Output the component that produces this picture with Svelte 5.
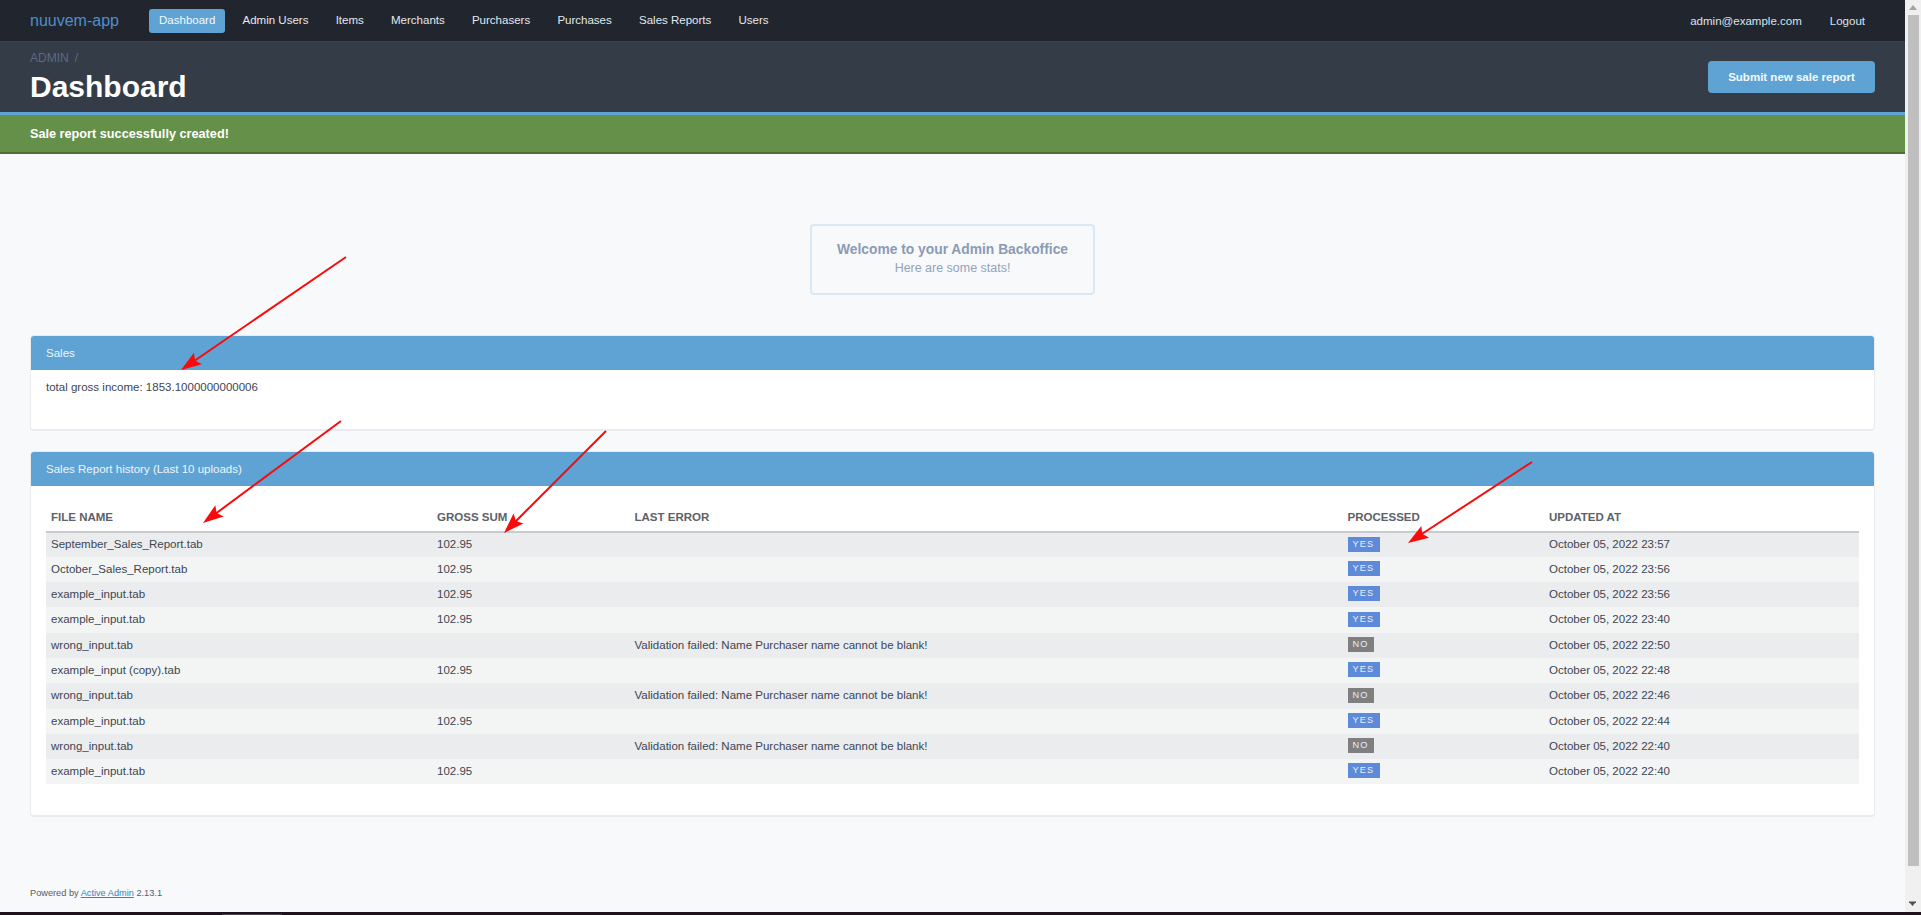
<script>
  const nav = ['Admin Users', 'Items', 'Merchants', 'Purchasers', 'Purchases', 'Sales Reports', 'Users'];
  const blank = 'Validation failed: Name Purchaser name cannot be blank!';
  const rows = [
    ['September_Sales_Report.tab', '102.95', '', 'YES', 'October 05, 2022 23:57'],
    ['October_Sales_Report.tab', '102.95', '', 'YES', 'October 05, 2022 23:56'],
    ['example_input.tab', '102.95', '', 'YES', 'October 05, 2022 23:56'],
    ['example_input.tab', '102.95', '', 'YES', 'October 05, 2022 23:40'],
    ['wrong_input.tab', '', blank, 'NO', 'October 05, 2022 22:50'],
    ['example_input (copy).tab', '102.95', '', 'YES', 'October 05, 2022 22:48'],
    ['wrong_input.tab', '', blank, 'NO', 'October 05, 2022 22:46'],
    ['example_input.tab', '102.95', '', 'YES', 'October 05, 2022 22:44'],
    ['wrong_input.tab', '', blank, 'NO', 'October 05, 2022 22:40'],
    ['example_input.tab', '102.95', '', 'YES', 'October 05, 2022 22:40']
  ];
  const arrows = [
    [346, 257, 181, 370],
    [341, 421, 203, 523],
    [606, 431, 504, 533],
    [1532, 462, 1408, 543]
  ].map(([x1, y1, x2, y2]) => {
    const len = Math.hypot(x2 - x1, y2 - y1);
    const ux = (x1 - x2) / len, uy = (y1 - y2) / len;
    const px = -uy, py = ux;
    const at = (a, b) => `${x2 + ux * a + px * b},${y2 + uy * a + py * b}`;
    return {
      x1, y1,
      nx: x2 + ux * 16, ny: y2 + uy * 16,
      head: [at(0, 0), at(20.5, 7), at(17, 0), at(20.5, -7)].join(' ')
    };
  });
</script>

<div class="screen">
  <div class="window">
    <div class="page">
      <header class="nav">
        <span class="brand">nuuvem-app</span>
        <ul class="tabs">
          <li class="tab current">Dashboard</li>
          {#each nav as item}
            <li class="tab">{item}</li>
          {/each}
        </ul>
        <div class="account">
          <span>admin@example.com</span>
          <span>Logout</span>
        </div>
      </header>

      <section class="titlebar">
        <div>
          <div class="crumbs"><span>ADMIN</span><span class="slash">/</span></div>
          <h2>Dashboard</h2>
        </div>
        <button class="action">Submit new sale report</button>
      </section>

      <div class="flash">Sale report successfully created!</div>

      <main class="content">
        <div class="welcome">
          <strong>Welcome to your Admin Backoffice</strong>
          <small>Here are some stats!</small>
        </div>

        <section class="panel">
          <h3>Sales</h3>
          <div class="panel-body sales">total gross income: 1853.1000000000006</div>
        </section>

        <section class="panel second">
          <h3>Sales Report history (Last 10 uploads)</h3>
          <div class="panel-body history">
            <table>
              <colgroup>
                <col class="c1" /><col class="c2" /><col class="c3" /><col class="c4" /><col class="c5" />
              </colgroup>
              <thead>
                <tr>
                  <th>FILE NAME</th><th>GROSS SUM</th><th>LAST ERROR</th><th>PROCESSED</th><th>UPDATED AT</th>
                </tr>
              </thead>
              <tbody>
                {#each rows as r}
                  <tr>
                    <td>{r[0]}</td>
                    <td>{r[1]}</td>
                    <td>{r[2]}</td>
                    <td><span class="tag" class:no={r[3] === 'NO'}>{r[3]}</span></td>
                    <td>{r[4]}</td>
                  </tr>
                {/each}
              </tbody>
            </table>
          </div>
        </section>
      </main>

      <footer class="foot">Powered by <a href="#top">Active Admin</a> 2.13.1</footer>
    </div>

    <div class="scrollbar">
      <svg class="sb-arrow" width="16" height="15" viewBox="0 0 16 15"><path d="M8 5 L12 10 H4 Z" fill="#a3a3a3" /></svg>
      <div class="thumb"></div>
      <svg class="sb-arrow down" width="16" height="15" viewBox="0 0 16 15"><path d="M4 4.500 H11 V6 H10 L7.500 9 L5 6 H4 Z" fill="#505050" /></svg>
    </div>
  </div>
  <div class="dock"><span></span></div>

  <svg class="marks" width="1921" height="915" viewBox="0 0 1921 915">
    {#each arrows as a}
      <line x1={a.x1} y1={a.y1} x2={a.nx} y2={a.ny} stroke="#fa0a0a" stroke-width="2" />
      <polygon points={a.head} fill="#fa0a0a" />
    {/each}
  </svg>
</div>

<style>
  :global(html), :global(body) {
    margin: 0;
    height: 100%;
    overflow: hidden;
  }
  :global(body) {
    font-family: "Liberation Sans", Arial, sans-serif;
    font-size: 11.520px;
    color: #3d4652;
  }
  .screen {
    position: relative;
    width: 1921px;
    height: 915px;
    overflow: hidden;
    display: flex;
    flex-direction: column;
  }
  .window {
    flex: 1;
    display: flex;
    min-height: 0;
  }
  .page {
    flex: 1;
    min-width: 0;
    background: #f8f9fb;
    display: flex;
    flex-direction: column;
  }
  .nav {
    height: 41px;
    flex: none;
    background: #21262e;
    display: flex;
    align-items: center;
    padding: 0 40px 0 30px;
    box-sizing: border-box;
    color: #e4e8ef;
  }
  .brand {
    font-size: 16px;
    color: #4d8fc7;
    width: 119px;
    flex: none;
  }
  .tabs {
    list-style: none;
    margin: 0;
    padding: 0;
    display: flex;
    align-items: center;
    gap: 7.200px;
  }
  .tab {
    padding: 0 10px;
    height: 24px;
    line-height: 23px;
    border-radius: 3px;
    box-sizing: border-box;
  }
  .tab.current {
    background: #5ea3d3;
    color: #f5f9fc;
    padding: 0 10px;
  }
  .account {
    margin-left: auto;
    display: flex;
    gap: 28px;
    color: #dbe2ec;
  }
  .titlebar {
    flex: none;
    background: #343c47;
    border-top: 1px solid #3a424d;
    border-bottom: 3px solid #5ea3d3;
    height: 70px;
    display: flex;
    justify-content: space-between;
    align-items: flex-start;
    padding: 0 30px;
  }
  .crumbs {
    margin-top: 9px;
    line-height: 14px;
    font-size: 12px;
    color: #5b6b82;
    display: flex;
    gap: 6px;
  }
  .slash { color: #5b6b82; }
  h2 {
    margin: 3px 0 0;
    font-size: 30px;
    line-height: 38px;
    color: #fff;
    font-weight: 700;
  }
  .action {
    margin-top: 19px;
    height: 32px;
    width: 167px;
    padding: 0;
    border: 0;
    border-radius: 4px;
    background: #5ea3d3;
    color: #f4f8fb;
    font: 700 11.520px "Liberation Sans", Arial, sans-serif;
  }
  .flash {
    height: 37px;
    line-height: 38px;
    flex: none;
    background: #659049;
    border-bottom: 2px solid #4e6e37;
    color: #fff;
    font-size: 12.700px;
    font-weight: 700;
    padding: 0 30px;
  }
  .content {
    padding: 70px 30px 0;
    flex: 1;
    min-height: 0;
  }
  .welcome {
    width: 285px;
    height: 71px;
    margin: 0 auto;
    box-sizing: border-box;
    border: 2px solid #d9e8f5;
    border-radius: 4px;
    color: #8a9bb3;
    display: flex;
    flex-direction: column;
    align-items: center;
    padding-top: 15px;
  }
  .welcome strong {
    font-size: 13.824px;
    line-height: 17px;
  }
  .welcome small {
    font-size: 12.480px;
    line-height: 20px;
    color: #93a3ba;
  }
  .panel {
    margin-top: 40px;
    background: #fff;
    border: 1px solid #e9ebf0;
    border-bottom-width: 2px;
    border-radius: 4px;
    overflow: hidden;
  }
  .panel.second { margin-top: 20px; }
  h3 {
    margin: 0;
    height: 34px;
    line-height: 34px;
    padding: 0 15px;
    background: #5ea3d3;
    color: #eef5fa;
    font-size: 11.520px;
    font-weight: 400;
  }
  .panel-body { padding: 0 15px; }
  .sales {
    height: 59px;
    padding-top: 10px;
    line-height: 14px;
    box-sizing: border-box;
    color: #3d4652;
  }
  .history {
    padding-top: 17px;
    padding-bottom: 31px;
  }
  table {
    width: 1813px;
    table-layout: fixed;
    border-collapse: collapse;
    font-size: 11.520px;
  }
  .c1 { width: 386px; }
  .c2 { width: 197.500px; }
  .c3 { width: 713px; }
  .c4 { width: 201.500px; }
  .c5 { width: 315px; }
  th {
    height: 29px;
    padding: 0 5px;
    box-sizing: border-box;
    text-align: left;
    font-size: 11.520px;
    font-weight: 700;
    color: #5c6269;
    border-bottom: 2px solid #c9cbcf;
  }
  td {
    height: 25px;
    padding: 0 5px 2px;
    box-sizing: border-box;
    color: #3d4652;
    background: #f3f5f4;
  }
  tbody tr:nth-child(4) td, tbody tr:nth-child(7) td { height: 26px; }
  tbody tr:nth-child(odd) td { background: #ebecee; }
  .tag {
    display: inline-block;
    height: 15px;
    line-height: 15px;
    padding: 0 5.500px 0 5px;
    background: #5d8bd9;
    color: #e9eef8;
    font-size: 9.216px;
    letter-spacing: 1.150px;
    vertical-align: middle;
  }
  .tag.no { background: #7f7f7f; }
  .foot {
    flex: none;
    padding: 0 30px 12px;
    font-size: 9.216px;
    line-height: 14px;
    color: #555d69;
  }
  .foot a { color: #3b80bb; }
  .scrollbar {
    width: 16px;
    flex: none;
    background: #f0f0f0;
    display: flex;
    flex-direction: column;
    align-items: center;
  }
  .sb-arrow { flex: none; }
  .thumb {
    width: 11px;
    height: 851px;
    background: #bfbfbf;
    margin-left: 1px;
    margin-right: 1px;
  }
  .down { margin-top: auto; margin-bottom: 0; }
  .dock {
    height: 3px;
    flex: none;
    background: #20121c;
    display: flex;
    align-items: flex-end;
  }
  .dock span {
    width: 60px;
    height: 1px;
    margin-left: 222px;
    background: #45404a;
  }
  .marks {
    position: absolute;
    left: 0;
    top: 0;
    pointer-events: none;
  }
</style>
